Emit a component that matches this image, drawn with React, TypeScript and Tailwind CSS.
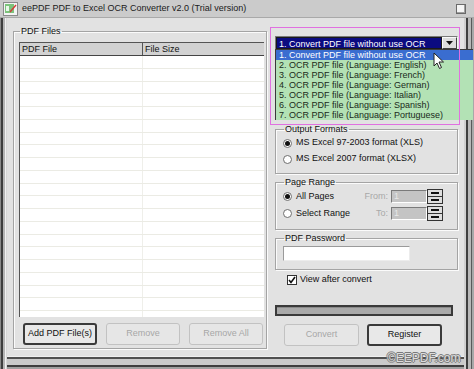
import React from "react";

function Radio({ checked }: { checked?: boolean }) {
  return (
    <span className="w-[9px] h-[9px] rounded-full border border-[#6e6e6e] bg-white flex items-center justify-center shrink-0">
      {checked && <span className="w-[5px] h-[5px] rounded-full bg-[#111]" />}
    </span>
  );
}

function Spinner() {
  return (
    <div className="flex flex-col w-[16px] h-[15px] shrink-0">
      <div className="flex-1 border border-[#333] bg-[#dedede] flex items-center justify-center">
        <span className="w-[8px] h-[2px] bg-[#111]" />
      </div>
      <div className="flex-1 border border-t-0 border-[#333] bg-[#dedede] flex items-center justify-center">
        <span className="w-[8px] h-[2px] bg-[#111]" />
      </div>
    </div>
  );
}

function DisabledInput() {
  return (
    <div className="w-[36px] h-[13px] bg-[#c4c4c4] border border-t-[#7a7a7a] border-l-[#7a7a7a] border-b-white border-r-white text-[#e8e8e8] leading-[11px] pl-[2px]">
      1
    </div>
  );
}

function Group({
  label,
  className,
  children,
}: {
  label: string;
  className?: string;
  children: React.ReactNode;
}) {
  return (
    <fieldset
      className={
        "border border-[#a4a4a4] shadow-[inset_1px_1px_0_#fbfbfb,1px_1px_0_#fbfbfb] " +
        (className || "")
      }
    >
      <legend className="ml-[1px] px-[1px] text-[#111] leading-[10px]">{label}</legend>
      {children}
    </fieldset>
  );
}

function Button({
  label,
  disabled,
  strong,
  w = "w-[75px]",
}: {
  label: string;
  disabled?: boolean;
  strong?: boolean;
  w?: string;
}) {
  return (
    <div
      className={
        w +
        " h-[22px] rounded-[3px] flex items-center justify-center " +
        (disabled
          ? "border border-[#c2c2c2] text-[#a6a6a6] bg-[#e6e6e6]"
          : strong
          ? "border-2 border-[#3a3a3a] text-[#111] bg-[#e8e8e8]"
          : "border border-[#555] text-[#111] bg-[#e8e8e8]")
      }
    >
      {label}
    </div>
  );
}

const listItems = [
  "2. OCR PDF file (Language: English)",
  "3. OCR PDF file (Language: French)",
  "4. OCR PDF file (Language: German)",
  "5. OCR PDF file (Language: Italian)",
  "6. OCR PDF file (Language: Spanish)",
  "7. OCR PDF file (Language: Portuguese)",
];

export default function App() {
  const rows = Array.from({ length: 22 });
  return (
    <div className="relative w-[474px] h-[369px] overflow-hidden bg-[#e2e2e2] font-['Liberation_Sans',Arial,sans-serif] text-[9px] text-[#111] flex flex-col">
      {/* Title bar */}
      <div className="h-[18px] shrink-0 bg-[#cbcbcb] border-b border-[#a9a9a9] flex items-center pl-[3px] pr-[8px]">
        <svg width="15" height="14" viewBox="0 0 15 14" className="shrink-0">
          <rect x="0.5" y="0.5" width="14" height="13" fill="#f4f4f4" stroke="#8a8a8a" />
          <rect x="2" y="2" width="9" height="9" fill="#7cc47c" />
          <path d="M3 4 L6 4 L6 9 L3 9 Z" fill="#e9f6e9" />
          <path d="M7 10 L13 3" stroke="#d23a3a" strokeWidth="1.4" />
        </svg>
        <span className="ml-[4px] text-[9px] text-[#1a1a1a]">
          eePDF PDF to Excel OCR Converter v2.0 (Trial version)
        </span>
        <div className="flex-1" />
        <div className="w-[10px] h-[10px] border border-[#6a6a6a] bg-[#f4f4f4] shadow-[inset_-1px_-1px_0_#a0a0a0]" />
      </div>

      {/* Body */}
      <div className="flex-1 flex min-h-0">
        {/* left frame */}
        <div className="flex shrink-0">
          <div className="w-[1px] bg-[#8a8a8a]" />
          <div className="w-[2px] bg-[#3e3e3e]" />
          <div className="w-[2px] bg-[#b4b4b4]" />
          <div className="w-[1px] bg-[#f2f2f2]" />
          <div className="w-[1px] bg-[#d8d8d8]" />
        </div>

        {/* main */}
        <div className="flex-1 flex flex-col min-w-0">
          <div className="flex-1 flex">
            {/* Left panel */}
            <Group label="PDF Files" className="ml-[6px] mt-[8px] w-[254px] h-[323px] pl-[5px] pr-[2px] pt-[6px] pb-[3px] flex flex-col">
              <div className="h-[276px] flex flex-col bg-white border-l border-t border-[#555] overflow-hidden">
                <div className="h-[13px] shrink-0 flex bg-[#d2d2d2] border-b border-[#444]">
                  <div className="w-[123px] border-r border-[#555] pl-[2px] leading-[12px]">PDF File</div>
                  <div className="flex-1 pl-[2px] leading-[12px]">File Size</div>
                </div>
                {rows.map((_, i) => (
                  <div key={i} className="h-[12.75px] shrink-0 flex border-b border-[#ebebe4]">
                    <div className="w-[123px] border-r border-[#efefea]" />
                    <div className="flex-1" />
                  </div>
                ))}
              </div>
              <div className="mt-[6px] flex gap-[9px] pl-[4px]">
                <Button label="Add PDF File(s)" strong w="w-[74px]" />
                <Button label="Remove" disabled w="w-[74px]" />
                <Button label="Remove All" disabled w="w-[74px]" />
              </div>
            </Group>

            {/* Right column */}
            <div className="ml-[8px] w-[184px] flex flex-col">
              {/* select */}
              <div className="relative mt-[18px] h-[14px] w-[183px] flex border border-t-[#7a7a7a] border-l-[#7a7a7a] border-b-[#f4f4f4] border-r-[#f4f4f4]">
                <div className="flex-1 bg-[#0b0b80] text-white pl-[2px] leading-[12px] border border-[#1a1a1a]">
                  1. Convert PDF file without use OCR
                </div>
                <div className="w-[15px] bg-[#dcdcdc] border border-t-[#fafafa] border-l-[#fafafa] border-b-[#404040] border-r-[#404040] flex items-center justify-center">
                  <svg width="7" height="4" viewBox="0 0 7 4">
                    <path d="M0 0 L7 0 L3.5 4 Z" fill="#111" />
                  </svg>
                </div>
                {/* dropdown list */}
                <div className="absolute left-[-1px] top-full w-[198px] border-l border-t border-[#3a3a3a] bg-[#b3e2b5]">
                  <div className="h-[10px] bg-[#3a6dd0] text-white pl-[3px] leading-[10px]">
                    1. Convert PDF file without use OCR
                  </div>
                  {listItems.map((t) => (
                    <div key={t} className="h-[10px] pl-[3px] leading-[10px] text-[#1a2a1a]">
                      {t}
                    </div>
                  ))}
                </div>
              </div>

              <Group label="Output Formats" className="mt-[74px] w-[183px] h-[50px] pl-[7px] pt-[2px] flex flex-col gap-[2px]">
                <div className="h-[14px] flex items-center gap-[4px]">
                  <Radio checked />
                  <span>MS Excel 97-2003 format (XLS)</span>
                </div>
                <div className="h-[14px] flex items-center gap-[4px]">
                  <Radio />
                  <span>MS Excel 2007 format (XLSX)</span>
                </div>
              </Group>

              <Group label="Page Range" className="mt-[3px] w-[183px] h-[53px] pl-[7px] pr-[14px] pt-[2px] flex flex-col gap-[2px]">
                <div className="h-[15px] flex items-center">
                  <Radio checked />
                  <span className="ml-[4px]">All Pages</span>
                  <div className="flex-1" />
                  <span className="text-[#a8a8a8] mr-[3px]">From:</span>
                  <DisabledInput />
                  <Spinner />
                </div>
                <div className="h-[15px] flex items-center">
                  <Radio />
                  <span className="ml-[4px]">Select Range</span>
                  <div className="flex-1" />
                  <span className="text-[#a8a8a8] mr-[3px]">To:</span>
                  <DisabledInput />
                  <Spinner />
                </div>
              </Group>

              <Group label="PDF Password" className="mt-[3px] w-[183px] h-[37px] pl-[7px] pt-[3px]">
                <div className="w-[127px] h-[15px] bg-white border border-t-[#9a9a9a] border-l-[#9a9a9a] border-b-[#ececec] border-r-[#ececec]" />
              </Group>

              <div className="mt-[5px] ml-[12px] h-[10px] flex items-center gap-[3px]">
                <div className="w-[10px] h-[10px] bg-white border border-[#333] flex items-center justify-center">
                  <svg width="8" height="8" viewBox="0 0 8 8">
                    <path d="M1 4 L3 6.5 L7 1" stroke="#111" strokeWidth="1.6" fill="none" />
                  </svg>
                </div>
                <span>View after convert</span>
              </div>

              <div className="mt-[20px] w-[178px] h-[11px] bg-[#a9a9a9] border-2 border-[#3a3a3a] shadow-[inset_0_1px_0_#8a8a8a]" />

              <div className="mt-[8px] ml-[9px] flex gap-[8px]">
                <Button label="Convert" disabled />
                <Button label="Register" strong />
              </div>
            </div>
          </div>
          {/* bottom frame */}
          <div className="h-[13px] shrink-0 flex flex-col">
            <div className="h-[1px] bg-[#f0f0f0]" />
            <div className="h-[2px] bg-[#505050]" />
            <div className="h-[6px] bg-[#cacaca]" />
            <div className="h-[2px] bg-[#3e3e3e]" />
            <div className="h-[2px] bg-[#a0a0a0]" />
          </div>
        </div>

        {/* right frame */}
        <div className="flex shrink-0">
          <div className="w-[2px] bg-[#cfcfcf]" />
          <div className="w-[2px] bg-[#3e3e3e]" />
          <div className="w-[3px] bg-[#b8b8b8]" />
          <div className="w-[1px] bg-[#5a5a5a]" />
          <div className="w-[2px] bg-[#a8a8a8]" />
        </div>
      </div>

      {/* pink highlight */}
      <div className="absolute left-[270px] top-[27px] w-[190px] h-[98px] border border-[#e070e0] pointer-events-none" />

      {/* cursor */}
      <svg className="absolute left-[433px] top-[52px]" width="12" height="18" viewBox="0 0 12 18">
        <path d="M1 1 L1 14 L4 11 L6.5 16.5 L8.5 15.5 L6 10 L10.5 10 Z" fill="#fff" stroke="#222" strokeWidth="1" />
      </svg>

      {/* watermark */}
      <div className="absolute left-[387px] top-[350px] text-[12px] leading-[16px] text-[#dcdcdc] [text-shadow:1px_0_#7a7a7a,-1px_0_#7a7a7a,0_1px_#7a7a7a,0_-1px_#7a7a7a]">
        ©EEPDF.com
      </div>
    </div>
  );
}
